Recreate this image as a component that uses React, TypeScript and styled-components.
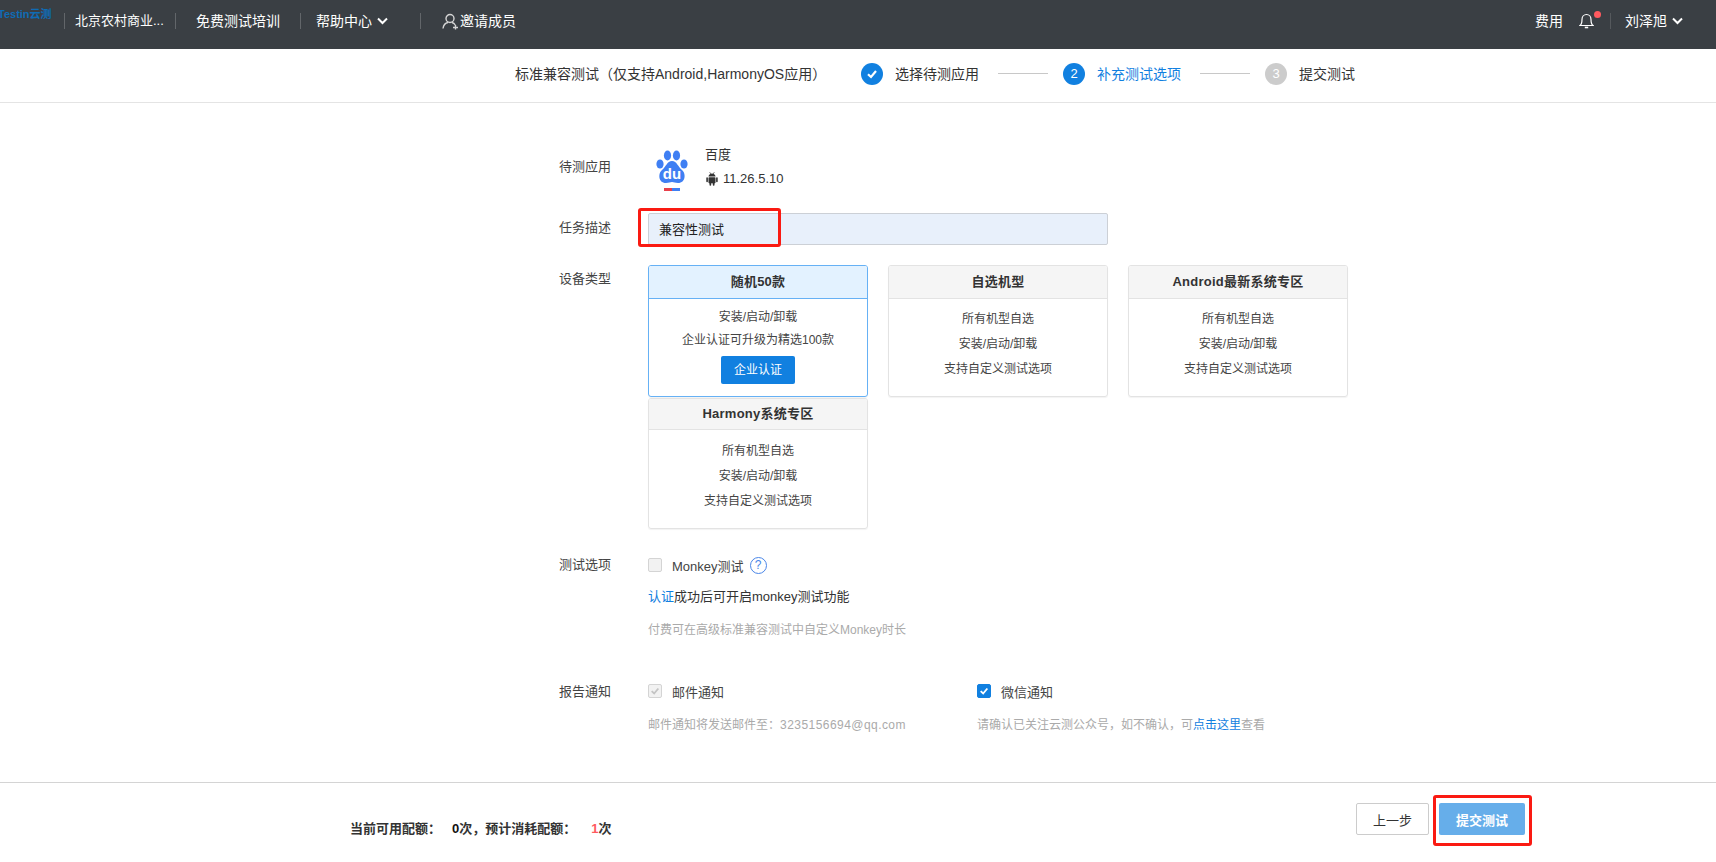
import * as React from 'react';
import styled, { createGlobalStyle } from 'styled-components';

const GlobalStyle = createGlobalStyle`
  html, body { margin: 0; padding: 0; background: #fff; }
  body {
    font-family: "Liberation Sans", "Noto Sans CJK SC", sans-serif;
    font-size: 13px;
    color: #333;
  }
  * { box-sizing: border-box; }
`;

const Chevron = () => (
  <svg width="11" height="8" viewBox="0 0 11 8" fill="none">
    <path d="M1 1.5 L5.5 6 L10 1.5" stroke="#fff" strokeWidth="2" />
  </svg>
);

const Check = ({ color, size = 12 }: { color: string; size?: number }) => (
  <svg width={size} height={size} viewBox="0 0 12 12" fill="none">
    <path d="M2 6.2 L5 9 L10 3" stroke={color} strokeWidth="2.2" />
  </svg>
);

const PawLogo = () => (
  <svg width="32" height="34" viewBox="0 0 32 34">
    <g fill="#3f7ff3">
      <ellipse cx="4" cy="14" rx="3.6" ry="4.6" />
      <ellipse cx="11.5" cy="5.5" rx="3.6" ry="5" />
      <ellipse cx="20.5" cy="5.5" rx="3.6" ry="5" />
      <ellipse cx="28" cy="14" rx="3.6" ry="4.6" />
      <path d="M16 11 C11 11 10 17 6 20 C2 23 2 33 10 33 C13 33 14 32 16 32 C18 32 19 33 22 33 C30 33 30 23 26 20 C22 17 21 11 16 11 Z" />
    </g>
    <text x="16" y="29" textAnchor="middle" fontSize="15" fontWeight="700" fill="#fff" fontFamily="Liberation Sans, sans-serif">du</text>
  </svg>
);

const AndroidIcon = () => (
  <svg width="14" height="14" viewBox="0 0 13 14" fill="#333">
    <path d="M3 4.6 C3 2.8 4.5 1.4 6.5 1.4 C8.5 1.4 10 2.8 10 4.6 Z" />
    <path d="M4.2 0.2 L5.2 1.9 M8.8 0.2 L7.8 1.9" stroke="#333" strokeWidth="0.7" />
    <rect x="3" y="5.2" width="7" height="6" rx="0.8" />
    <rect x="0.8" y="5.2" width="1.6" height="5" rx="0.8" />
    <rect x="10.6" y="5.2" width="1.6" height="5" rx="0.8" />
    <rect x="4" y="10.5" width="1.7" height="3.3" rx="0.8" />
    <rect x="7.3" y="10.5" width="1.7" height="3.3" rx="0.8" />
  </svg>
);

export default function App() {
  return (
    <Page>
      <GlobalStyle />
      <TopBar>
        <Logo>Testin云测</Logo>
        <NavItem $w={111} $pl={10} $small>北京农村商业...</NavItem>
        <NavItem $w={125} $pl={20}>免费测试培训</NavItem>
        <NavItem $w={120} $pl={15}>帮助中心<ChevronGap><Chevron /></ChevronGap></NavItem>
        <NavItem $w={130} $pl={21}>
          <UserIcon width="17" height="17" viewBox="0 0 17 17" fill="none" stroke="#d5d5d5" strokeWidth="1.4">
            <circle cx="8" cy="5.5" r="4" />
            <path d="M1 15.5 C1.5 12 3.5 10 6 9.5 M10 9.5 C11.5 10 12.5 10.8 13.2 12" />
            <path d="M11 14.5 H16 M13.5 12 V16.5" />
          </UserIcon>
          邀请成员
        </NavItem>
        <RightGroup>
          <span>费用</span>
          <BellWrap>
            <svg width="15" height="16" viewBox="0 0 15 16" fill="none" stroke="#fff" strokeWidth="1.2">
              <path d="M1 12.5 C3 11 3 9 3 6.5 C3 3.5 5 1.5 7.5 1.5 C10 1.5 12 3.5 12 6.5 C12 9 12 11 14 12.5 Z" />
              <path d="M5.8 14.5 H9.2" strokeWidth="1.6" />
            </svg>
            <BellDot />
          </BellWrap>
          <UserName>刘泽旭<ChevronGap><Chevron /></ChevronGap></UserName>
        </RightGroup>
      </TopBar>

      <StepBar>
        <StepTitle>标准兼容测试（仅支持Android,HarmonyOS应用）</StepTitle>
        <StepCircle $bg="#1180e0"><Check color="#fff" /></StepCircle>
        <StepText>选择待测应用</StepText>
        <StepLine />
        <StepCircle $bg="#1180e0">2</StepCircle>
        <StepText $active>补充测试选项</StepText>
        <StepLine />
        <StepCircle $bg="#cccccc">3</StepCircle>
        <StepText>提交测试</StepText>
      </StepBar>

      <Form>
        <AppRow>
          <RowLabel $mt={-16}>待测应用</RowLabel>
          <AppIcon>
            <PawLogo />
            <AppBar />
          </AppIcon>
          <AppMeta>
            <span>百度</span>
            <AppVersion><AndroidIcon />11.26.5.10</AppVersion>
          </AppMeta>
        </AppRow>

        <TaskRow>
          <RowLabel $mt={-6}>任务描述</RowLabel>
          <FieldWrap>
            <TaskInput defaultValue="兼容性测试" />
            <RedBox $l={-10} $t={-5} $w={143} $h={39} />
          </FieldWrap>
        </TaskRow>

        <DeviceRow>
          <RowLabel $mt={3}>设备类型</RowLabel>
          <CardGrid>
            <Card $selected>
              <CardHead $h={33} $selected>随机50款</CardHead>
              <CardBody $lh={23} $pt={7}>
                <div>安装/启动/卸载</div>
                <div>企业认证可升级为精选100款</div>
                <CertButton>企业认证</CertButton>
              </CardBody>
            </Card>
            <Card>
              <CardHead $h={33}>自选机型</CardHead>
              <CardBody $lh={25} $pt={8}>
                <div>所有机型自选</div>
                <div>安装/启动/卸载</div>
                <div>支持自定义测试选项</div>
              </CardBody>
            </Card>
            <Card>
              <CardHead $h={33}>Android最新系统专区</CardHead>
              <CardBody $lh={25} $pt={8}>
                <div>所有机型自选</div>
                <div>安装/启动/卸载</div>
                <div>支持自定义测试选项</div>
              </CardBody>
            </Card>
            <Card>
              <CardHead $h={31}>Harmony系统专区</CardHead>
              <CardBody $lh={25} $pt={9}>
                <div>所有机型自选</div>
                <div>安装/启动/卸载</div>
                <div>支持自定义测试选项</div>
              </CardBody>
            </Card>
          </CardGrid>
        </DeviceRow>

        <OptionRow>
          <RowLabel $mt={-3}>测试选项</RowLabel>
          <OptionCol>
            <CheckLine>
              <CheckBox />
              <span>Monkey测试</span>
              <HelpMark>?</HelpMark>
            </CheckLine>
            <CertLine><BlueLink>认证</BlueLink>成功后可开启monkey测试功能</CertLine>
            <GrayNote $mt={16}>付费可在高级标准兼容测试中自定义Monkey时长</GrayNote>
          </OptionCol>
        </OptionRow>

        <NotifyRow>
          <RowLabel $mt={-2}>报告通知</RowLabel>
          <NotifyCol>
            <CheckLine>
              <CheckBox><Check color="#c4c4c4" size={10} /></CheckBox>
              <span>邮件通知</span>
            </CheckLine>
            <GrayNote $mt={18}>邮件通知将发送邮件至：<Email>3235156694@qq.com</Email></GrayNote>
          </NotifyCol>
          <OptionCol>
            <CheckLine>
              <CheckBox $checked><Check color="#fff" size={10} /></CheckBox>
              <span>微信通知</span>
            </CheckLine>
            <GrayNote $mt={18}>请确认已关注云测公众号，如不确认，可<BlueLink>点击这里</BlueLink>查看</GrayNote>
          </OptionCol>
        </NotifyRow>
      </Form>

      <Footer>
        <Quota>
          当前可用配额：<QuotaNum>0</QuotaNum>次，预计消耗配额：<QuotaNum $red>1</QuotaNum>次
        </Quota>
        <PrevButton>上一步</PrevButton>
        <FieldWrap>
          <SubmitButton>提交测试</SubmitButton>
          <RedBox $l={-6} $t={-8} $w={99} $h={51} />
        </FieldWrap>
      </Footer>
    </Page>
  );
}

const Page = styled.div`
  min-height: 862px;
  display: flex;
  flex-direction: column;
  overflow: hidden;
`;

const TopBar = styled.header`
  height: 49px;
  background: #3a3f44;
  color: #fff;
  display: flex;
  align-items: flex-start;
  padding-top: 13px;
  flex-shrink: 0;
  font-size: 14px;
`;

const Logo = styled.div`
  flex: 0 0 66px;
  margin-left: -2px;
  margin-top: -5px;
  font-size: 11px;
  font-weight: 700;
  line-height: 12px;
  color: #0f6cb5;
  white-space: nowrap;
`;

const NavItem = styled.div<{ $w: number; $pl: number; $small?: boolean }>`
  width: ${(p) => p.$w}px;
  height: 16px;
  line-height: 16px;
  padding-left: ${(p) => p.$pl}px;
  border-left: 1px solid #62666a;
  font-size: ${(p) => (p.$small ? 13 : 14)}px;
  display: flex;
  align-items: center;
  white-space: nowrap;
`;

const UserIcon = styled.svg`
  margin-right: 1px;
  flex-shrink: 0;
`;

const ChevronGap = styled.span`
  margin-left: 5px;
  display: inline-flex;
`;

const RightGroup = styled.div`
  margin-left: auto;
  padding-right: 33px;
  display: flex;
  align-items: center;
  height: 16px;
  line-height: 16px;
`;

const BellWrap = styled.span`
  position: relative;
  margin: 0 16px;
  display: inline-flex;
  width: 15px;
`;

const BellDot = styled.i`
  position: absolute;
  right: -7px;
  top: -2px;
  width: 7px;
  height: 7px;
  border-radius: 50%;
  background: #ff5a5f;
`;

const UserName = styled.span`
  display: flex;
  align-items: center;
  border-left: 1px solid #55595d;
  padding-left: 14px;
`;

const StepBar = styled.div`
  height: 54px;
  border-bottom: 1px solid #e4e4e4;
  display: flex;
  align-items: center;
  padding: 0 0 4px 515px;
  flex-shrink: 0;
`;

const StepTitle = styled.div`
  width: 346px;
  white-space: nowrap;
  font-size: 14px;
  margin-top: -2px;
`;

const StepCircle = styled.span<{ $bg: string }>`
  width: 22px;
  height: 22px;
  border-radius: 50%;
  background: ${(p) => p.$bg};
  color: #fff;
  font-size: 13px;
  display: inline-flex;
  align-items: center;
  justify-content: center;
  flex-shrink: 0;
`;

const StepText = styled.span<{ $active?: boolean }>`
  margin: -1px 0 0 12px;
  font-size: 14px;
  color: ${(p) => (p.$active ? '#1180e0' : '#333')};
`;

const StepLine = styled.span`
  width: 50px;
  height: 1px;
  background: #c8c8c8;
  margin: 0 15px 0 19px;
`;

const Form = styled.main`
  padding-left: 559px;
  padding-top: 47px;
`;

const RowLabel = styled.div<{ $mt?: number }>`
  width: 89px;
  flex-shrink: 0;
  margin-top: ${(p) => p.$mt ?? 0}px;
  color: #444;
  font-size: 13px;
`;

const AppRow = styled.div`
  display: flex;
  height: 46px;
  align-items: center;
`;

const AppIcon = styled.div`
  width: 57px;
  padding-left: 8px;
  margin-top: -6px;
  display: flex;
  flex-direction: column;
`;

const AppBar = styled.i`
  display: block;
  width: 16px;
  height: 3px;
  margin: 4px 0 0 8px;
  background: linear-gradient(90deg, #e8404a 50%, #3f7ff3 50%);
`;

const AppMeta = styled.div`
  display: flex;
  flex-direction: column;
  gap: 8px;
  margin-top: -16px;
`;

const AppVersion = styled.div`
  display: flex;
  align-items: center;
  gap: 4px;
`;

const TaskRow = styled.div`
  display: flex;
  align-items: center;
  margin-top: 17px;
`;

const FieldWrap = styled.div`
  position: relative;
`;

const TaskInput = styled.input`
  display: block;
  width: 460px;
  height: 32px;
  border: 1px solid #ccd0d6;
  border-radius: 2px;
  background: #e8f0fb;
  padding: 0 10px 2px;
  font: inherit;
  color: #222;
  outline: none;
`;

const RedBox = styled.i<{ $l: number; $t: number; $w: number; $h: number }>`
  position: absolute;
  left: ${(p) => p.$l}px;
  top: ${(p) => p.$t}px;
  width: ${(p) => p.$w}px;
  height: ${(p) => p.$h}px;
  border: 3px solid #fa1a12;
  border-radius: 3px;
  pointer-events: none;
`;

const DeviceRow = styled.div`
  display: flex;
  margin-top: 20px;
`;

const CardGrid = styled.div`
  display: grid;
  grid-template-columns: repeat(3, 220px);
  column-gap: 20px;
  row-gap: 1px;
`;

const Card = styled.div<{ $selected?: boolean }>`
  height: 132px;
  border: 1px solid ${(p) => (p.$selected ? '#66b1f5' : '#e3e3e3')};
  border-radius: 3px;
  box-shadow: 0 1px 1px rgba(0, 0, 0, 0.05);
  overflow: hidden;
  &:nth-child(4) { height: 131px; }
`;

const CardHead = styled.div<{ $h: number; $selected?: boolean }>`
  height: ${(p) => p.$h}px;
  line-height: ${(p) => p.$h - 1}px;
  text-align: center;
  font-weight: 700;
  font-size: 13px;
  letter-spacing: 0.25px;
  color: #333;
  background: ${(p) => (p.$selected ? '#e3f2ff' : '#f5f5f5')};
  border-bottom: 1px solid ${(p) => (p.$selected ? '#66b1f5' : '#e3e3e3')};
`;

const CardBody = styled.div<{ $lh: number; $pt: number }>`
  text-align: center;
  font-size: 12px;
  color: #444;
  line-height: ${(p) => p.$lh}px;
  padding-top: ${(p) => p.$pt}px;
`;

const CertButton = styled.button`
  display: block;
  margin: 4px auto 0;
  width: 74px;
  height: 28px;
  border: 0;
  border-radius: 2px;
  background: #1180e0;
  color: #fff;
  font: inherit;
  font-size: 12px;
`;

const OptionRow = styled.div`
  display: flex;
  margin-top: 28px;
`;

const OptionCol = styled.div`
  display: flex;
  flex-direction: column;
`;

const CheckLine = styled.div`
  display: flex;
  align-items: center;
  height: 16px;
  font-size: 13px;
  color: #444;
`;

const CheckBox = styled.span<{ $checked?: boolean }>`
  width: 14px;
  height: 14px;
  margin-right: 10px;
  border-radius: 2px;
  border: 1px solid ${(p) => (p.$checked ? '#1180e0' : '#d4d4d4')};
  background: ${(p) => (p.$checked ? '#1180e0' : '#f2f2f2')};
  display: inline-flex;
  align-items: center;
  justify-content: center;
`;

const HelpMark = styled.span`
  width: 17px;
  height: 17px;
  margin-left: 6px;
  border-radius: 50%;
  border: 1px solid #4a86e8;
  color: #4a86e8;
  font-size: 12px;
  line-height: 15px;
  text-align: center;
`;

const CertLine = styled.div`
  margin-top: 15px;
  line-height: 18px;
  font-size: 13px;
`;

const BlueLink = styled.span`
  color: #1180e0;
`;

const GrayNote = styled.div<{ $mt: number }>`
  margin-top: ${(p) => p.$mt}px;
  font-size: 12px;
  line-height: 16px;
  color: #aaa;
`;

const Email = styled.span`
  letter-spacing: 0.45px;
`;

const NotifyRow = styled.div`
  display: flex;
  margin-top: 45px;
`;

const NotifyCol = styled(OptionCol)`
  width: 329px;
`;

const Footer = styled.footer`
  margin-top: auto;
  height: 80px;
  border-top: 1px solid #d4d4d4;
  display: flex;
  align-items: flex-start;
  padding: 20px 191px 0 350px;
`;

const Quota = styled.div`
  margin-right: auto;
  margin-top: 17px;
  font-weight: 700;
  font-size: 13px;
  line-height: 18px;
  color: #333;
`;

const QuotaNum = styled.span<{ $red?: boolean }>`
  margin-left: ${(p) => (p.$red ? 15 : 11)}px;
  color: ${(p) => (p.$red ? '#ff5a5f' : '#111')};
`;

const PrevButton = styled.button`
  width: 73px;
  height: 32px;
  margin-right: 10px;
  border: 1px solid #ccc;
  border-radius: 2px;
  background: #fff;
  color: #333;
  font: inherit;
`;

const SubmitButton = styled.button`
  display: block;
  width: 86px;
  height: 32px;
  border: 0;
  border-radius: 2px;
  background: #66aeea;
  color: #fff;
  font: inherit;
  font-weight: 700;
`;
